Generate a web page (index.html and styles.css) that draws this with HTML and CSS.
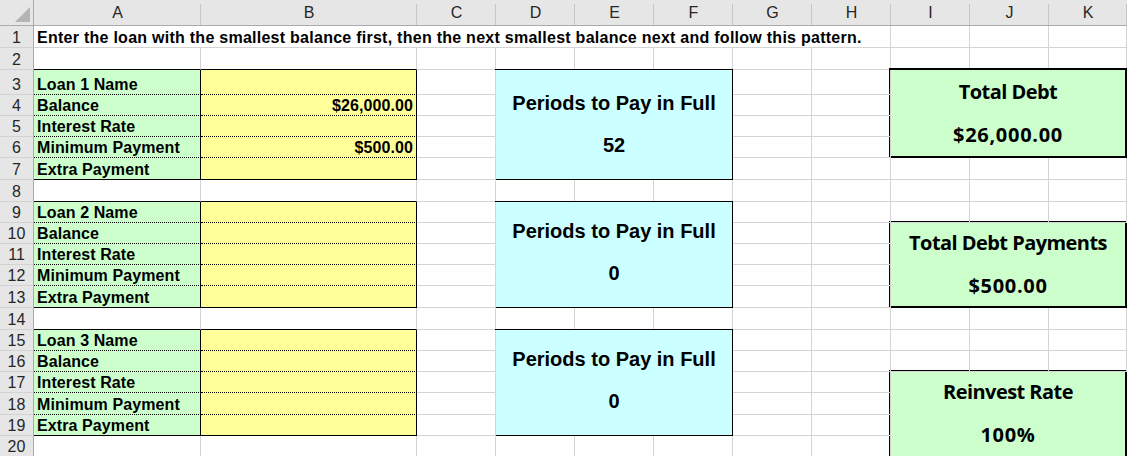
FILE: index.html
```html
<!DOCTYPE html>
<html lang="en">

<head>
    <meta charset="UTF-8">
    <meta name="viewport" content="width=device-width, initial-scale=1.0">
    <title>Debt Snowball</title>
    <link rel="stylesheet" href="styles.css">
</head>

<body>
    <div class="sheet">
        <!-- column headers -->
        <div class="corner">
            <svg width="34" height="25" viewBox="0 0 34 25"><polygon points="15,22 30,22 30,7" fill="#b4b4b4" /></svg>
        </div>
        <div class="ch">A</div>
        <div class="ch">B</div>
        <div class="ch">C</div>
        <div class="ch">D</div>
        <div class="ch">E</div>
        <div class="ch">F</div>
        <div class="ch">G</div>
        <div class="ch">H</div>
        <div class="ch">I</div>
        <div class="ch">J</div>
        <div class="ch">K</div>

        <!-- row 1 -->
        <div class="rh">1</div>
        <div class="c note">Enter the loan with the smallest balance first, then the next smallest balance next and follow this pattern.</div>
        <div class="c"></div><div class="c"></div><div class="c"></div>

        <!-- row 2 -->
        <div class="rh">2</div>
        <div class="c top"></div><div class="c top"></div>
        <div class="c"></div><div class="c"></div><div class="c"></div><div class="c"></div><div class="c"></div>
        <div class="c"></div><div class="c"></div><div class="c"></div><div class="c"></div>

        <!-- loan 1 -->
        <div class="pay pay1">
            <div>Periods to Pay in Full</div>
            <div>52</div>
        </div>
        <div class="sum sum1">
            <div class="title">Total Debt</div>
            <div class="amount">$26,000.00</div>
        </div>

        <div class="rh">3</div>
        <div class="l">Loan 1 Name</div><div class="v"></div>
        <div class="c"></div><div class="c"></div><div class="c"></div>

        <div class="rh">4</div>
        <div class="l">Balance</div><div class="v">$26,000.00</div>
        <div class="c"></div><div class="c"></div><div class="c"></div>

        <div class="rh">5</div>
        <div class="l">Interest Rate</div><div class="v"></div>
        <div class="c"></div><div class="c"></div><div class="c"></div>

        <div class="rh">6</div>
        <div class="l">Minimum Payment</div><div class="v">$500.00</div>
        <div class="c"></div><div class="c"></div><div class="c"></div>

        <div class="rh">7</div>
        <div class="l end">Extra Payment</div><div class="v end"></div>
        <div class="c"></div><div class="c"></div><div class="c"></div>
        <div class="c"></div><div class="c"></div><div class="c"></div>

        <!-- row 8 -->
        <div class="rh">8</div>
        <div class="c top"></div><div class="c top"></div>
        <div class="c"></div><div class="c"></div><div class="c"></div><div class="c"></div><div class="c"></div>
        <div class="c"></div><div class="c"></div><div class="c"></div><div class="c"></div>

        <!-- loan 2 -->
        <div class="pay pay2">
            <div>Periods to Pay in Full</div>
            <div>0</div>
        </div>
        <div class="sum sum2">
            <div class="title">Total Debt Payments</div>
            <div class="amount">$500.00</div>
        </div>

        <div class="rh">9</div>
        <div class="l">Loan 2 Name</div><div class="v"></div>
        <div class="c"></div><div class="c"></div><div class="c"></div>
        <div class="c"></div><div class="c"></div><div class="c"></div>

        <div class="rh">10</div>
        <div class="l">Balance</div><div class="v"></div>
        <div class="c"></div><div class="c"></div><div class="c"></div>

        <div class="rh">11</div>
        <div class="l">Interest Rate</div><div class="v"></div>
        <div class="c"></div><div class="c"></div><div class="c"></div>

        <div class="rh">12</div>
        <div class="l">Minimum Payment</div><div class="v"></div>
        <div class="c"></div><div class="c"></div><div class="c"></div>

        <div class="rh">13</div>
        <div class="l end">Extra Payment</div><div class="v end"></div>
        <div class="c"></div><div class="c"></div><div class="c"></div>

        <!-- row 14 -->
        <div class="rh">14</div>
        <div class="c top"></div><div class="c top"></div>
        <div class="c"></div><div class="c"></div><div class="c"></div><div class="c"></div><div class="c"></div>
        <div class="c"></div><div class="c"></div><div class="c"></div><div class="c"></div>

        <!-- loan 3 -->
        <div class="pay pay3">
            <div>Periods to Pay in Full</div>
            <div>0</div>
        </div>
        <div class="sum sum3">
            <div class="title">Reinvest Rate</div>
            <div class="amount">100%</div>
        </div>

        <div class="rh">15</div>
        <div class="l">Loan 3 Name</div><div class="v"></div>
        <div class="c"></div><div class="c"></div><div class="c"></div>
        <div class="c"></div><div class="c"></div><div class="c"></div>

        <div class="rh">16</div>
        <div class="l">Balance</div><div class="v"></div>
        <div class="c"></div><div class="c"></div><div class="c"></div>
        <div class="c"></div><div class="c"></div><div class="c"></div>

        <div class="rh">17</div>
        <div class="l">Interest Rate</div><div class="v"></div>
        <div class="c"></div><div class="c"></div><div class="c"></div>

        <div class="rh">18</div>
        <div class="l">Minimum Payment</div><div class="v"></div>
        <div class="c"></div><div class="c"></div><div class="c"></div>

        <div class="rh">19</div>
        <div class="l end">Extra Payment</div><div class="v end"></div>
        <div class="c"></div><div class="c"></div><div class="c"></div>

        <!-- row 20, 21 -->
        <div class="rh">20</div>
        <div class="c"></div><div class="c"></div><div class="c"></div><div class="c"></div>
        <div class="c"></div><div class="c"></div><div class="c"></div><div class="c"></div>

        <div class="rh">21</div>
        <div class="c"></div><div class="c"></div><div class="c"></div><div class="c"></div><div class="c"></div><div class="c"></div>
        <div class="c"></div><div class="c"></div><div class="c"></div><div class="c"></div><div class="c"></div>
    </div>
</body>

</html>
```

FILE: styles.css
```css
* {
    margin: 0;
    padding: 0;
    box-sizing: border-box;
}

body {
    overflow: hidden;
    background-color: #fff;
    color: #000;
    font-family: "Liberation Sans", Arial, sans-serif;
}

.sheet {
    display: grid;
    grid-template-columns: 34px 167px 216px 79px 79px 79px 79px 79px 79px 79px 79px 78px;
    grid-template-rows: 26px 22px 22px 25px 21px 21px 21px 22px 22px 21px 21px 21px 21px 22px 22px 21px 21px 21px 22px 21px 21px 21px;
    width: 1127px;
}

/* headers */
.corner {
    background-color: #e6e6e6;
    border-right: 1px solid #ababab;
    border-bottom: 1px solid #ababab;
}

.corner svg {
    display: block;
}

.ch {
    display: flex;
    align-items: center;
    justify-content: center;
    background-color: #e6e6e6;
    background-image: linear-gradient(#c6c6c6, #c6c6c6);
    background-size: 1px 21px;
    background-position: right bottom;
    background-repeat: no-repeat;
    border-bottom: 1px solid #ababab;
    font-size: 16px;
    color: #262626;
}

.rh {
    display: flex;
    align-items: flex-end;
    justify-content: center;
    background-color: #e6e6e6;
    border-right: 1px solid #ababab;
    border-bottom: 1px solid #d2d2d2;
    font-size: 16px;
    line-height: 18px;
    color: #262626;
}

/* cells */
.c,
.l,
.v {
    display: flex;
    align-items: flex-end;
    padding: 0 3px;
    font-size: 16px;
    font-weight: bold;
    line-height: 18px;
    letter-spacing: 0.1px;
    white-space: nowrap;
}

.c {
    border-right: 1px solid #d4d4d4;
    border-bottom: 1px solid #d4d4d4;
}

.c.top {
    border-bottom-color: #000;
}

.note {
    grid-column: span 8;
    letter-spacing: 0.26px;
}

.l {
    background-color: #ccffcc;
    border-right: 1px solid #000;
    border-bottom: 1px dotted #000;
}

.v {
    justify-content: flex-end;
    background-color: #ffff99;
    border-right: 1px solid #000;
    border-bottom: 1px dotted #000;
}

.l.end,
.v.end {
    border-bottom-style: solid;
}

/* result boxes */
.pay {
    grid-column: 5 / 8;
    display: flex;
    flex-direction: column;
    justify-content: center;
    align-items: center;
    gap: 18px;
    margin: -1px 0 0 -1px;
    background-color: #ccffff;
    border: 1px solid #000;
    font-size: 20px;
    font-weight: bold;
    line-height: 24px;
}

.pay1 {
    grid-row: 4 / 9;
    padding-bottom: 2px;
}

.pay2 {
    grid-row: 10 / 15;
    padding-bottom: 6px;
}

.pay3 {
    grid-row: 16 / 21;
    padding-bottom: 6px;
}

.sum {
    grid-column: 10 / 13;
    display: flex;
    flex-direction: column;
    justify-content: center;
    align-items: center;
    gap: 19px;
    margin: -2px 0 0 -2px;
    background-color: #ccffcc;
    border: 2px solid #000;
    font-family: "Open Sans", sans-serif;
    font-size: 20px;
    font-weight: 700;
    line-height: 24px;
}

.sum .title {
    letter-spacing: -0.55px;
}

.sum .amount {
    letter-spacing: 0.7px;
}

.sum1 {
    grid-row: 4 / 8;
}

.sum2 {
    grid-row: 11 / 15;
}

.sum3 {
    grid-row: 18 / 22;
    margin-bottom: -3px;
    padding-bottom: 4px;
}
```
